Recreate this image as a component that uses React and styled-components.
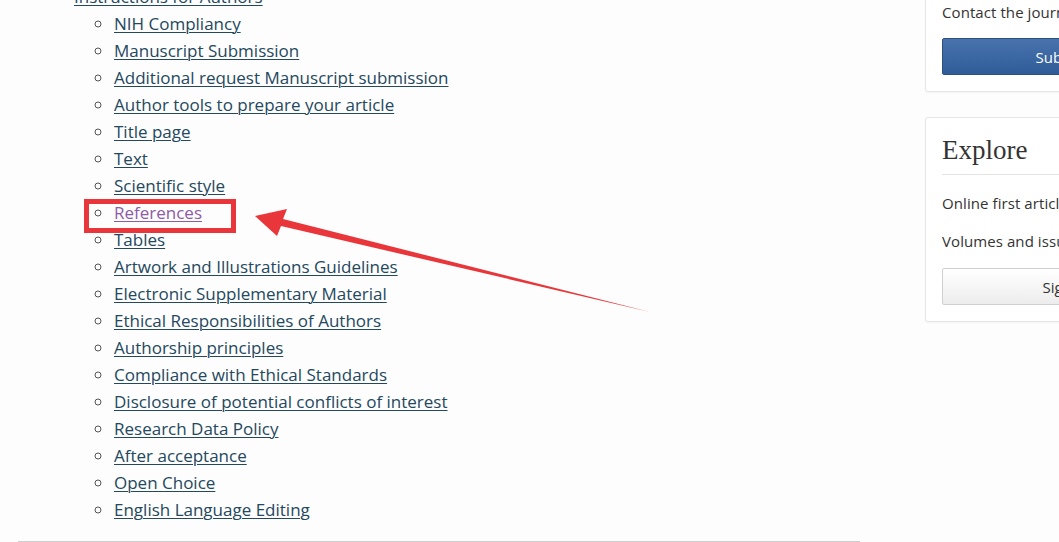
import React from "react";
import styled, { createGlobalStyle } from "styled-components";

const Global = createGlobalStyle`
  html, body { margin: 0; padding: 0; overflow: hidden; background: #fdfdfd; }
  body { font-family: "Open Sans", "Noto Sans", sans-serif; color: #333; }
`;

const Page = styled.div`
  position: relative;
  display: flex;
  align-items: flex-start;
  gap: 65px;
  padding-left: 18px;
  margin-top: -32px;
  width: 1400px;
`;

const Main = styled.main`
  width: 842px;
  flex-shrink: 0;
  padding-top: 15px;
  border-bottom: 1px solid #cfcfcf;
  padding-bottom: 18px;
`;

const OuterList = styled.ul`
  list-style: none;
  margin: 0;
  padding: 0 0 0 56px;
`;

const NestedList = styled.ul`
  list-style: circle;
  margin: 0;
  padding: 0 0 0 40px;
  color: #555;
`;

const Item = styled.li`
  font-size: 17px;
  line-height: 27px;
  letter-spacing: 0;
`;

const Link = styled.a`
  color: ${(p) => (p.$visited ? "#8f5ba6" : "#24485e")};
  text-decoration: underline;
  text-underline-offset: 2px;
  text-decoration-thickness: 1px;
  cursor: pointer;
`;

const Sidebar = styled.aside`
  width: 354px;
  flex-shrink: 0;
  padding-top: 16px;
  display: flex;
  flex-direction: column;
  gap: 25px;
`;

const Card = styled.section`
  background: #fff;
  border: 1px solid #e6e6e6;
  border-radius: 3px;
  box-shadow: 0 1px 2px rgba(0, 0, 0, 0.04);
  padding: 16px;
  display: flex;
  flex-direction: column;
`;

const CardText = styled.p`
  margin: 0 0 ${(p) => p.$gap || 16}px;
  font-size: 15px;
  line-height: 22px;
  color: #333;
  letter-spacing: 0.08px;
`;

const CardTitle = styled.h2`
  margin: 0 0 17px;
  padding-bottom: 8px;
  border-bottom: 1px solid #e3e3e3;
  font-family: "Liberation Serif", "DejaVu Serif", serif;
  font-weight: normal;
  font-size: 27px;
  line-height: 32px;
  color: #333;
`;

const Button = styled.button`
  height: 37px;
  width: 100%;
  font-family: "Open Sans", sans-serif;
  font-size: 15px;
  border-radius: 2px;
  cursor: pointer;
  ${(p) =>
    p.$primary
      ? `background: linear-gradient(#4873ad, #2f5c98);
         border: 1px solid #2a4f80;
         color: #fff;`
      : `background: linear-gradient(#ffffff, #ededed);
         border: 1px solid #cfcfcf;
         color: #333;`}
`;

const Highlight = styled.div`
  position: absolute;
  left: 84px;
  top: 231px;
  width: 142px;
  height: 24px;
  border: 5px solid #e8363a;
  pointer-events: none;
`;

const Arrow = styled.svg`
  position: absolute;
  left: 0;
  top: 32px;
  width: 700px;
  height: 340px;
  pointer-events: none;
`;

const items = [
  "NIH Compliancy",
  "Manuscript Submission",
  "Additional request Manuscript submission",
  "Author tools to prepare your article",
  "Title page",
  "Text",
  "Scientific style",
  "References",
  "Tables",
  "Artwork and Illustrations Guidelines",
  "Electronic Supplementary Material",
  "Ethical Responsibilities of Authors",
  "Authorship principles",
  "Compliance with Ethical Standards",
  "Disclosure of potential conflicts of interest",
  "Research Data Policy",
  "After acceptance",
  "Open Choice",
  "English Language Editing",
];

export default function App() {
  return (
    <>
      <Global />
      <Page>
        <Main>
          <OuterList>
            <Item>
              <Link>Instructions for Authors</Link>
              <NestedList>
                {items.map((t) => (
                  <Item key={t}>
                    <Link $visited={t === "References"}>{t}</Link>
                  </Item>
                ))}
              </NestedList>
            </Item>
          </OuterList>
        </Main>
        <Sidebar>
          <Card>
            <CardText $gap={15}>Contact the journal</CardText>
            <Button $primary>Submit manuscript</Button>
          </Card>
          <Card>
            <CardTitle>Explore</CardTitle>
            <CardText>Online first articles</CardText>
            <CardText>Volumes and issues</CardText>
            <Button>Sign up for alerts</Button>
          </Card>
        </Sidebar>
        <Highlight />
        <Arrow viewBox="0 0 700 340">
          <polygon
            points="255,216 287,209 283,219 650,312 281,226 277,236"
            fill="#e8363a"
          />
        </Arrow>
      </Page>
    </>
  );
}
